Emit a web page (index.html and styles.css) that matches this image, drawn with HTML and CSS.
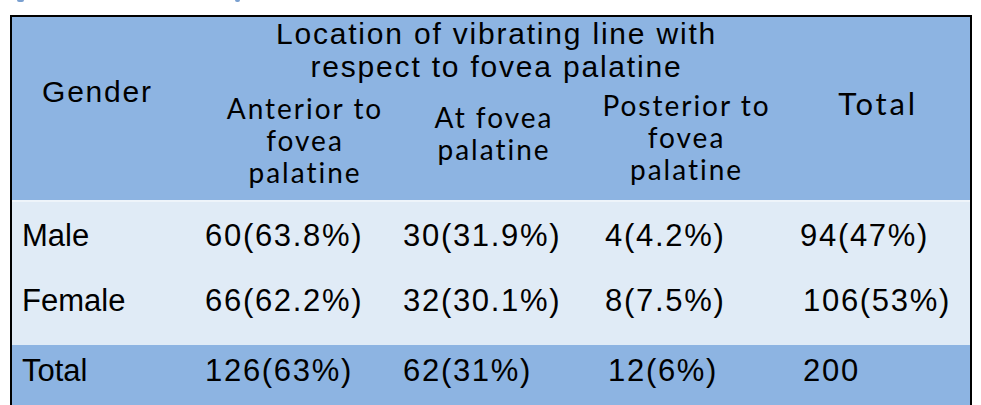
FILE: index.html
```html
<!DOCTYPE html>
<html>
<head>
<meta charset="utf-8">
<link rel="stylesheet" href="styles.css">
</head>
<body>
<div class="title-strip"><span class="frag frag-a"></span><span class="frag frag-b"></span></div>
<div class="table">
  <div class="head">
    <div class="h-gender">Gender</div>
    <div class="h-location">Location of vibrating line with<br>respect to fovea palatine</div>
    <div class="h-sub h-ant">Anterior to<br>fovea<br>palatine</div>
    <div class="h-sub h-at">At fovea<br>palatine</div>
    <div class="h-sub h-post">Posterior to<br>fovea<br>palatine</div>
    <div class="h-total">Total</div>
  </div>
  <div class="row row-male">
    <div class="lbl">Male</div><div class="num">60(63.8%)</div><div class="num">30(31.9%)</div><div class="num">4(4.2%)</div><div class="num">94(47%)</div>
  </div>
  <div class="row row-female">
    <div class="lbl">Female</div><div class="num">66(62.2%)</div><div class="num">32(30.1%)</div><div class="num">8(7.5%)</div><div class="num num-shift">106(53%)</div>
  </div>
  <div class="row row-total">
    <div class="lbl">Total</div><div class="num">126(63%)</div><div class="num">62(31%)</div><div class="num num-shift2">12(6%)</div><div class="num num-shift">200</div>
  </div>
</div>
</body>
</html>
```
FILE: styles.css
```css
html, body {
  margin: 0;
  padding: 0;
  background: #ffffff;
  overflow: hidden;
  height: 405px;
}
body {
  font-family: "Liberation Sans", Arial, sans-serif;
  color: #000;
}
.title-strip {
  height: 3px;
  display: flex;
  align-items: flex-start;
}
.frag {
  display: block;
  height: 2px;
  background: #7aa0d0;
  border-radius: 0 0 2px 2px;
}
.frag-a { width: 7px; margin-left: 17px; }
.frag-b { width: 5px; margin-left: 211px; }
.table {
  margin: 12px 0 0 10px;
  width: 958px;
  height: 420px;
  border: 2px solid #000;
  border-bottom: none;
  background: #8db4e2;
}
.head, .row {
  display: grid;
  grid-template-columns: 183px 198px 202px 195px 180px;
}
.head {
  grid-template-rows: 72px 111px;
  background: #8db4e2;
  border-bottom: 2px solid #eef4fa;
}
.h-gender {
  grid-column: 1;
  grid-row: 1 / span 2;
  font-size: 30px;
  line-height: 33px;
  letter-spacing: 1.8px;
  padding-top: 58px;
  padding-left: 30px;
}
.h-location {
  grid-column: 2 / span 3;
  grid-row: 1;
  font-size: 30px;
  line-height: 33px;
  letter-spacing: 1.8px;
  text-align: center;
  padding-left: 8px;
}
.h-sub {
  grid-row: 2;
  font-family: Lato, "Open Sans", sans-serif;
  font-size: 28px;
  line-height: 32px;
  letter-spacing: 2px;
  text-align: center;
}
.h-ant { grid-column: 2; padding-top: 3px; padding-left: 22px; }
.h-at { grid-column: 3; padding-top: 12px; }
.h-post { grid-column: 4; padding-top: 0; padding-right: 12px; }
.h-total {
  grid-column: 5;
  grid-row: 1 / span 2;
  font-family: Lato, "Open Sans", sans-serif;
  font-size: 31px;
  line-height: 33px;
  letter-spacing: 2.8px;
  text-align: center;
  padding-top: 70px;
  padding-right: 4px;
}
.row {
  font-size: 31px;
  line-height: 36px;
}
.row > div { padding-left: 10px; }
.row-male { height: 66px; padding-top: 16px; box-sizing: border-box; background: #e0ebf6; }
.row-female { height: 77px; padding-top: 15px; box-sizing: border-box; background: #e0ebf6; }
.row-total { height: 80px; padding-top: 8px; box-sizing: border-box; background: #8db4e2; }
.num { letter-spacing: 1.7px; }
.num-shift { padding-left: 13px !important; }
.num-shift2 { padding-left: 13px !important; }
```
